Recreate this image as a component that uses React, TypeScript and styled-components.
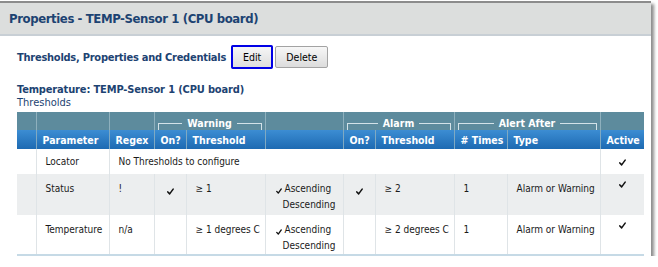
import React from "react";
import styled, { createGlobalStyle } from "styled-components";

const GlobalStyle = createGlobalStyle`
  body {
    margin: 0;
    background: #ffffff;
    font-family: "DejaVu Sans Condensed", "Liberation Sans", sans-serif;
  }
`;

const Panel = styled.div`
  width: 651px;
  height: 255px;
  margin-top: 1px;
  background: #ffffff;
  border-top: 2px solid #8c8c8c;
  box-shadow: 3px 3px 3px rgba(0, 0, 0, 0.45);
  box-sizing: border-box;
  overflow: hidden;
`;

const TitleBar = styled.div`
  height: 31px;
  display: flex;
  align-items: center;
  padding-left: 9px;
  background: #dcdedd;
  border-bottom: 2px solid #c8cfd5;
  color: #1d4372;
  font-size: 13px;
  letter-spacing: -0.4px;
  font-weight: bold;
`;

const Content = styled.div`
  padding: 9px 6px 0 17px;
`;

const ActionRow = styled.div`
  display: flex;
  align-items: center;
  gap: 2px;
  height: 24px;
`;

const SectionTitle = styled.span`
  color: #1d4372;
  font-size: 11px;
  letter-spacing: -0.25px;
  font-weight: bold;
  margin-right: 3px;
`;

const Button = styled.button<{ $focused?: boolean }>`
  font-family: inherit;
  font-size: 10.5px;
  color: #000;
  height: ${({ $focused }) => ($focused ? "24px" : "22px")};
  padding: 0 ${({ $focused }) => ($focused ? "11px" : "10px")};
  background: linear-gradient(#f7f7f7, #dcdcdc);
  border: 1px solid #a3a3a3;
  border-radius: 2px;
  outline: ${({ $focused }) => ($focused ? "2px solid #0000e6" : "none")};
  outline-offset: -2px;
  box-shadow: ${({ $focused }) => ($focused ? "inset 0 0 0 1px #d8d8d8" : "none")};
`;

const SubTitle = styled.div`
  margin-top: 14px;
  color: #1d4372;
  font-size: 11px;
  letter-spacing: -0.15px;
  font-weight: bold;
  line-height: 13px;
`;

const Caption = styled.div`
  color: #1d4372;
  font-size: 11px;
  line-height: 13px;
  margin-bottom: 3px;
`;

const Table = styled.table`
  width: 627px;
  border-collapse: collapse;
  table-layout: fixed;
  font-size: 10px;
  border-bottom: 2px solid #c6dae6;
`;

const GroupRow = styled.tr`
  background: #5d8b9d;
  height: 18px;
`;

const HeadRow = styled.tr`
  background: linear-gradient(#3c8dd3, #1d6ab2);
  height: 19px;
`;

const HeadCell = styled.th<{ $center?: boolean }>`
  color: #ffffff;
  font-size: 10.5px;
  font-weight: bold;
  text-align: ${({ $center }) => ($center ? "center" : "left")};
  padding: 0 6px;
  border-left: 1px solid #7fa9c2;
  white-space: nowrap;
  &:first-child {
    border-left: none;
  }
`;

const GroupCell = styled.th`
  color: #ffffff;
  font-size: 10.5px;
  font-weight: bold;
  padding: 0 3px;
  border-left: 1px solid #8eb0bd;
  vertical-align: bottom;
  &:first-child {
    border-left: none;
  }
`;

const Bracket = styled.div`
  display: flex;
  align-items: flex-start;
  height: 14px;
`;

const BracketLine = styled.div<{ $side: "left" | "right" }>`
  flex: 1;
  height: 6px;
  margin-top: 7px;
  border-top: 1px solid #d3e2e8;
  ${({ $side }) => ($side === "left" ? "border-left" : "border-right")}: 1px solid #d3e2e8;
`;

const BracketLabel = styled.span`
  padding: 0 5px;
  line-height: 14px;
`;

const Row = styled.tr<{ $shade?: boolean; $h: number }>`
  background: ${({ $shade }) => ($shade ? "#eceeef" : "#ffffff")};
  height: ${({ $h }) => $h}px;
`;

const Cell = styled.td<{ $mid?: boolean; $center?: boolean; $top?: number }>`
  color: #1a1a1a;
  vertical-align: ${({ $mid }) => ($mid ? "middle" : "top")};
  text-align: ${({ $center }) => ($center ? "center" : "left")};
  padding: ${({ $mid, $top }) => ($mid ? "0" : `${$top ?? 7}px`)} 9px 0;
  line-height: 16px;
  border-left: 1px solid #dfe4e7;
  white-space: nowrap;
  &:first-child {
    border-left: none;
  }
`;

const DirList = styled.div`
  padding-left: 1px;
`;

const DirLine = styled.div<{ $indent?: boolean }>`
  display: flex;
  align-items: flex-end;
  gap: 3px;
  padding-left: ${({ $indent }) => ($indent ? "7px" : "0")};
  svg {
    margin-bottom: 3px;
  }
`;

const Check = ({ size = 7 }: { size?: number }) => (
  <svg width={size} height={size} viewBox="0 0 10 10" style={{ display: "inline-block" }}>
    <path
      d="M1.2 5.6 L3.8 8.4 L8.8 1.6"
      fill="none"
      stroke="#111"
      strokeWidth="2.2"
      strokeLinecap="round"
      strokeLinejoin="round"
    />
  </svg>
);

const Group = ({ label }: { label: string }) => (
  <Bracket>
    <BracketLine $side="left" />
    <BracketLabel>{label}</BracketLabel>
    <BracketLine $side="right" />
  </Bracket>
);

const Direction = () => (
  <DirList>
    <DirLine>
      <Check size={6} />
      Ascending
    </DirLine>
    <DirLine $indent>Descending</DirLine>
  </DirList>
);

const widths = [19, 73, 45, 32, 79, 78, 32, 79, 53, 93, 44];

export default function App() {
  return (
    <>
      <GlobalStyle />
      <Panel>
        <TitleBar>Properties - TEMP-Sensor 1 (CPU board)</TitleBar>
        <Content>
          <ActionRow>
            <SectionTitle>Thresholds, Properties and Credentials</SectionTitle>
            <Button $focused>Edit</Button>
            <Button>Delete</Button>
          </ActionRow>
          <SubTitle>Temperature: TEMP-Sensor 1 (CPU board)</SubTitle>
          <Caption>Thresholds</Caption>
          <Table>
            <colgroup>
              {widths.map((w, i) => (
                <col key={i} style={{ width: w }} />
              ))}
            </colgroup>
            <thead>
              <GroupRow>
                <GroupCell />
                <GroupCell />
                <GroupCell />
                <GroupCell colSpan={2}>
                  <Group label="Warning" />
                </GroupCell>
                <GroupCell />
                <GroupCell colSpan={2}>
                  <Group label="Alarm" />
                </GroupCell>
                <GroupCell colSpan={2}>
                  <Group label="Alert After" />
                </GroupCell>
                <GroupCell />
              </GroupRow>
              <HeadRow>
                <HeadCell />
                <HeadCell>Parameter</HeadCell>
                <HeadCell>Regex</HeadCell>
                <HeadCell>On?</HeadCell>
                <HeadCell>Threshold</HeadCell>
                <HeadCell />
                <HeadCell>On?</HeadCell>
                <HeadCell>Threshold</HeadCell>
                <HeadCell># Times</HeadCell>
                <HeadCell>Type</HeadCell>
                <HeadCell $center>Active</HeadCell>
              </HeadRow>
            </thead>
            <tbody>
              <Row $h={25}>
                <Cell />
                <Cell $mid>Locator</Cell>
                <Cell $mid colSpan={8}>
                  No Thresholds to configure
                </Cell>
                <Cell $center $top={6}>
                  <Check />
                </Cell>
              </Row>
              <Row $shade $h={41}>
                <Cell />
                <Cell>Status</Cell>
                <Cell>!</Cell>
                <Cell $center $top={10}>
                  <Check />
                </Cell>
                <Cell>≥ 1</Cell>
                <Cell>
                  <Direction />
                </Cell>
                <Cell $center $top={10}>
                  <Check />
                </Cell>
                <Cell>≥ 2</Cell>
                <Cell>1</Cell>
                <Cell>Alarm or Warning</Cell>
                <Cell $center $top={3}>
                  <Check />
                </Cell>
              </Row>
              <Row $h={40}>
                <Cell />
                <Cell>Temperature</Cell>
                <Cell>n/a</Cell>
                <Cell />
                <Cell>≥ 1 degrees C</Cell>
                <Cell>
                  <Direction />
                </Cell>
                <Cell />
                <Cell>≥ 2 degrees C</Cell>
                <Cell>1</Cell>
                <Cell>Alarm or Warning</Cell>
                <Cell $center $top={3}>
                  <Check />
                </Cell>
              </Row>
            </tbody>
          </Table>
        </Content>
      </Panel>
    </>
  );
}
